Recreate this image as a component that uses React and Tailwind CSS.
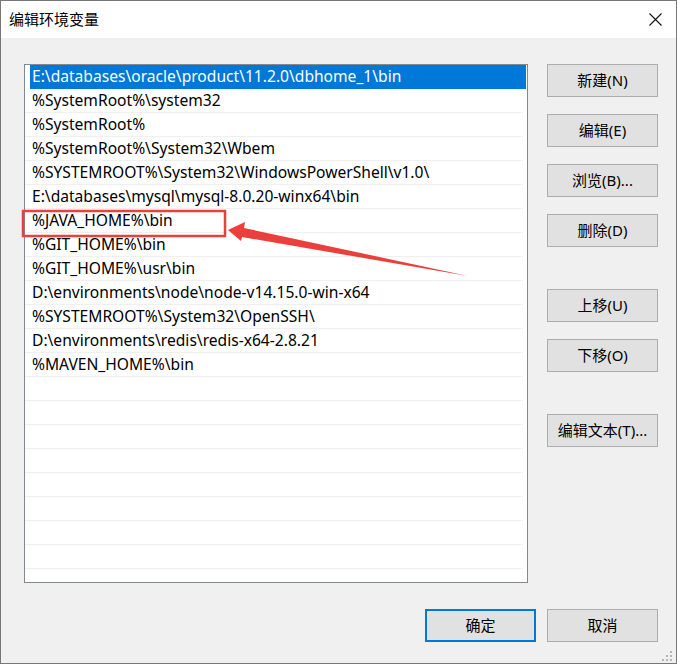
import React from "react";

const paths = [
  "E:\\databases\\oracle\\product\\11.2.0\\dbhome_1\\bin",
  "%SystemRoot%\\system32",
  "%SystemRoot%",
  "%SystemRoot%\\System32\\Wbem",
  "%SYSTEMROOT%\\System32\\WindowsPowerShell\\v1.0\\",
  "E:\\databases\\mysql\\mysql-8.0.20-winx64\\bin",
  "%JAVA_HOME%\\bin",
  "%GIT_HOME%\\bin",
  "%GIT_HOME%\\usr\\bin",
  "D:\\environments\\node\\node-v14.15.0-win-x64",
  "%SYSTEMROOT%\\System32\\OpenSSH\\",
  "D:\\environments\\redis\\redis-x64-2.8.21",
  "%MAVEN_HOME%\\bin",
];

const rows = [...paths, ...Array(9).fill("")];

const font = {
  fontFamily: '"Noto Sans", "Noto Sans CJK SC", sans-serif',
};

const Btn = ({ children, primary, className = "" }) => (
  <button
    className={
      "w-[111px] h-[33px] bg-[#e1e1e1] text-[15px] text-black flex items-center justify-center " +
      (primary ? "border-2 border-[#0078d7] " : "border border-[#adadad] ") +
      className
    }
  >
    {children}
  </button>
);

const App = () => {
  return (
    <div
      className="relative w-[677px] h-[664px] border border-[#777777] flex flex-col bg-[#f0f0f0] overflow-hidden"
      style={font}
    >
      {/* 标题栏 */}
      <div className="h-[37px] bg-white flex items-center justify-between pl-[8px] pr-[14px] shrink-0">
        <span className="text-[15px] text-black">编辑环境变量</span>
        <svg width="13" height="13" viewBox="0 0 13 13">
          <path d="M0.5 0.5 L12.5 12.5 M12.5 0.5 L0.5 12.5" stroke="#111" strokeWidth="1.1" />
        </svg>
      </div>

      {/* 主体 */}
      <div className="flex-1 flex flex-col pt-[26px] pl-[23px] pr-[18px]">
        <div className="flex">
          <div className="w-[504px] h-[519px] border border-[#828790] bg-white overflow-hidden">
            {rows.map((p, i) => (
              <div
                key={i}
                className={
                  "h-[24px] flex items-center text-[15.6px] whitespace-nowrap " +
                  (i === 0
                    ? "ml-[5px] mr-[1px] bg-[#0078d7] text-white pl-[2px]"
                    : "border-b border-[#f0f0f0] pl-[7px] mr-[4px] text-black")
                }
              >
                {p}
              </div>
            ))}
          </div>

          <div className="ml-[19px] flex flex-col">
            <Btn>新建(N)</Btn>
            <Btn className="mt-[17px]">编辑(E)</Btn>
            <Btn className="mt-[17px]">浏览(B)...</Btn>
            <Btn className="mt-[17px]">删除(D)</Btn>
            <Btn className="mt-[42px]">上移(U)</Btn>
            <Btn className="mt-[17px]">下移(O)</Btn>
            <Btn className="mt-[42px]">编辑文本(T)...</Btn>
          </div>
        </div>

        <div className="flex justify-end gap-[11px] mt-[26px]">
          <Btn primary>确定</Btn>
          <Btn>取消</Btn>
        </div>
      </div>

      {/* 标注：红框与箭头 */}
      <svg
        className="absolute top-0 left-0 pointer-events-none"
        width="677"
        height="664"
        viewBox="0 0 677 664"
      >
        <rect x="22" y="210" width="202" height="25" fill="none" stroke="#e8403a" strokeWidth="2.5" />
        <polygon
          points="227,229 244,221 243,227 467,275 241,236 240,240"
          fill="#ec3e3a"
        />
        {/* 调整大小手柄 */}
        <g fill="#b5b5b5">
          <rect x="669" y="650" width="2" height="2" />
          <rect x="665" y="654" width="2" height="2" />
          <rect x="669" y="654" width="2" height="2" />
          <rect x="661" y="658" width="2" height="2" />
          <rect x="665" y="658" width="2" height="2" />
          <rect x="669" y="658" width="2" height="2" />
        </g>
      </svg>
    </div>
  );
};

export default App;
